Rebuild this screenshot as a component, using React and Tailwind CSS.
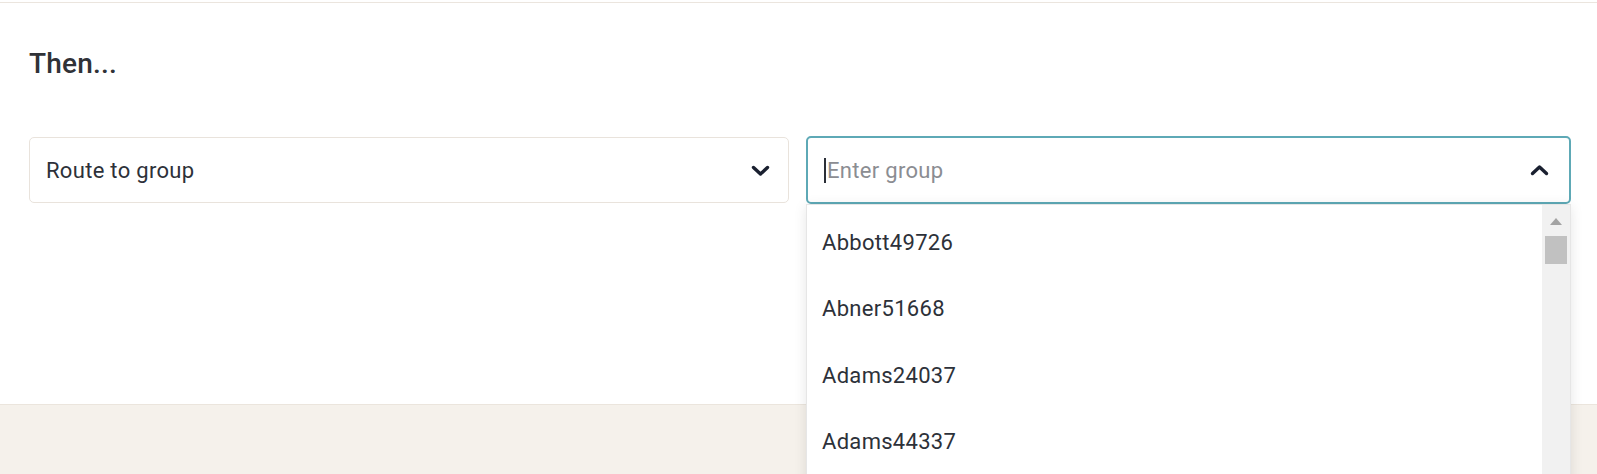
import React from "react";

const groups = ["Abbott49726", "Abner51668", "Adams24037", "Adams44337", "Adams61234"];

function ChevronDown() {
  return (
    <svg width="19" height="13" viewBox="0 0 19 13" fill="none">
      <path d="M2.5 3.5l7 6.5 7-6.5" stroke="#1a2030" strokeWidth="3.4" strokeLinecap="round" strokeLinejoin="round" />
    </svg>
  );
}

function ChevronUp() {
  return (
    <svg width="19" height="13" viewBox="0 0 19 13" fill="none">
      <path d="M2.5 9.5l7-6.5 7 6.5" stroke="#1a2030" strokeWidth="3.4" strokeLinecap="round" strokeLinejoin="round" />
    </svg>
  );
}

export default function App() {
  return (
    <div className="w-full h-[474px] overflow-hidden bg-[#f5f1eb] font-['Roboto',sans-serif]">
      <div className="h-[2px] bg-white" />

      {/* Then panel */}
      <div className="bg-white border-t border-[#ebe5de] h-[403px] pl-[29px] pr-[26px] pt-[44px] border-b border-b-[#ebe5dd]">
        <h2 className="text-[28px] leading-[34px] font-medium text-[#303237] tracking-[0.2px]">Then...</h2>

        <div className="grid grid-cols-[760px_1fr] gap-[17px] mt-[56px]">
          {/* Action select */}
          <div className="h-[66px] border border-[#e9e3dc] rounded-[5px] flex items-center justify-between pl-[16px] pr-[18px]">
            <span className="text-[22px] tracking-[0.3px] text-[#2d3139]">Route to group</span>
            <ChevronDown />
          </div>

          {/* Group combobox */}
          <div className="relative">
            <div className="h-[68px] -mt-[1px] border-2 border-[#5ea9b6] rounded-[5px] flex items-center justify-between pl-[16px] pr-[20px]">
              <div className="flex items-center">
                <span className="w-[2px] h-[25px] bg-[#2b2f38] mr-[1px]" />
                <span className="text-[22px] tracking-[0.3px] text-[#8b8d92]">Enter group</span>
              </div>
              <ChevronUp />
            </div>

            <div className="absolute left-0 right-0 top-[67px] h-[300px] bg-white border border-[#e6e6e6] shadow-[0_2px_12px_rgba(0,0,0,0.10)] flex">
              <ul className="flex-1 pt-[4px]">
                {groups.map((g) => (
                  <li key={g} className="h-[66.5px] flex items-center pl-[15px] text-[22px] tracking-[0.3px] text-[#2d3139]">
                    {g}
                  </li>
                ))}
              </ul>
              {/* scrollbar */}
              <div className="w-[28px] bg-[#f1f1f1] flex flex-col items-center pt-[13px]">
                <div className="w-0 h-0 border-l-[6px] border-r-[6px] border-b-[7px] border-l-transparent border-r-transparent border-b-[#a3a3a3]" />
                <div className="w-[22px] h-[28px] bg-[#c1c1c1] mt-[11px]" />
              </div>
            </div>
          </div>
        </div>
      </div>
    </div>
  );
}
